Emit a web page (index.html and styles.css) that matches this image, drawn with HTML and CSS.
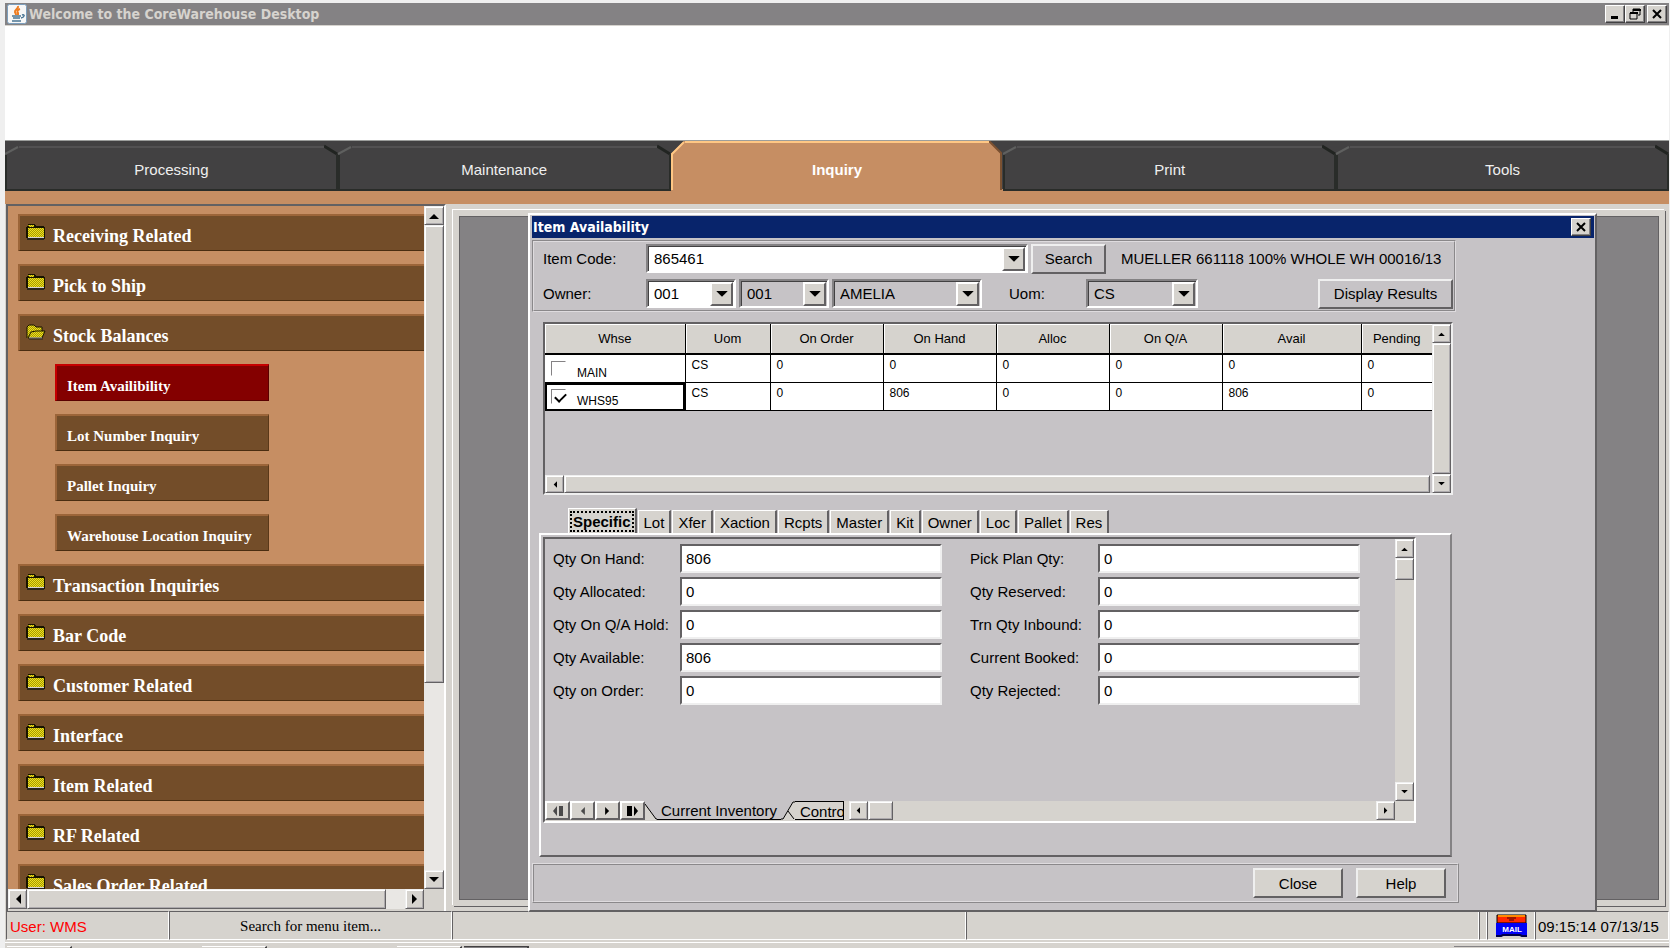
FILE: index.html
```html
<!doctype html>
<html lang="en">
  <head>
    <meta charset="UTF-8" />
    <meta name="viewport" content="width=device-width, initial-scale=1.0" />
    <title>Welcome to the CoreWarehouse Desktop</title>
    <link rel="stylesheet" href="styles.css">
  </head>
  <body>
    <!-- Shared icon shapes -->
    <svg class="defs" width="0" height="0" aria-hidden="true">
      <defs>
        <pattern id="dither" width="2" height="2" patternUnits="userSpaceOnUse">
          <rect width="2" height="2" fill="#a59a00" />
          <rect width="1" height="1" fill="#efdf21" />
          <rect x="1" y="1" width="1" height="1" fill="#efdf21" />
        </pattern>
      </defs>
      <symbol id="folder" viewBox="0 0 20 16">
        <path d="M1 14V3h1V1h7v2h9v11z" fill="url(#dither)" />
        <path d="M0 3h2v11H0zM2 0h7v1H2zM8 1h2v1H8zM1 2h17v2H1zM18 3h1v12h-1z" fill="#181400" />
        <path d="M3 1h5v2H3z" fill="url(#dither)" />
        <path d="M2 13h16v1H2z" fill="#d6d3ce" />
        <path d="M1 14h17v2H1z" fill="#29241c" />
      </symbol>
      <symbol id="folder-open" viewBox="0 0 20 16">
        <path d="M1 14V3l2-2h5l2 2h6v4" fill="url(#dither)" stroke="#181400" />
        <path d="M2 14l3-6 5-1h9l-3 7z" fill="url(#dither)" stroke="#181400" />
        <path d="M3 14h13" stroke="#c6c3c6" />
        <path d="M3 15h14" stroke="#29241c" />
      </symbol>
      <symbol id="up" viewBox="0 0 10 6"><path d="M0 6L5 1l5 5z" /></symbol>
      <symbol id="down" viewBox="0 0 10 6"><path d="M0 0h10L5 5z" /></symbol>
      <symbol id="left" viewBox="0 0 6 10"><path d="M6 0v10L1 5z" /></symbol>
      <symbol id="right" viewBox="0 0 6 10"><path d="M0 0v10l5-5z" /></symbol>
      <symbol id="cross" viewBox="0 0 12 10"><path d="M2 1l8 8M10 1L2 9" fill="none" stroke="#000" stroke-width="2" /></symbol>
      <symbol id="edge-left" viewBox="0 0 14 49">
        <path d="M0 13L13 6" stroke="#5f605f" stroke-width="2" />
        <path d="M1 14v35" stroke="#292c29" stroke-width="2" />
      </symbol>
      <symbol id="edge-right" viewBox="0 0 14 49">
        <path d="M0 5l13 8" stroke="#212421" stroke-width="3" />
        <path d="M13 13v36" stroke="#292c29" stroke-width="2" />
      </symbol>
      <symbol id="edge-left-active" viewBox="0 0 14 49">
        <path d="M0 13L13 0h1v49H0z" fill="#c68e63" />
        <path d="M1 49V13L13 1" fill="none" stroke="#ffc784" stroke-width="2" />
      </symbol>
      <symbol id="edge-right-active" viewBox="0 0 14 49">
        <path d="M0 0l12 12v37H0z" fill="#c68e63" />
        <path d="M0 0l12 12v37" fill="none" stroke="#7b5131" stroke-width="2" />
      </symbol>
    </svg>

    <header class="titlebar">
      <svg class="java" width="20" height="20" viewBox="0 0 20 20" aria-hidden="true">
        <rect x="0.5" y="0.5" width="19" height="19" rx="2" fill="#f7f7f7" stroke="#7b9ebd" />
        <path d="M11 2c1 3-4 4-3 6 0 1 1 1 1 3M13 5c-3 1-3 3-2 4v2" fill="none" stroke="#ef7d21" stroke-width="2" />
        <path d="M5 12h9M6 14h7M15 11c3-1 3 2-1 3M5 17h9" fill="none" stroke="#4a7594" stroke-width="1.5" />
      </svg>
      <h1 class="titlebar-text">Welcome to the CoreWarehouse Desktop</h1>
      <div class="window-buttons">
        <button class="caption-btn" aria-label="Minimize"><svg width="12" height="10"><path d="M2 7h7v3H2z" /></svg></button>
        <button class="caption-btn" aria-label="Restore">
          <svg width="12" height="12"><path d="M4 1h7v6H9M4 1v3M1 5h7v6H1z" fill="none" stroke="#000" /><path d="M4 1h8v2H4zM1 4h8v2H1z" /></svg>
        </button>
        <button class="caption-btn caption-close" aria-label="Close window"><svg width="12" height="10"><use href="#cross" /></svg></button>
      </div>
    </header>
    <div class="banner"></div>

    <nav class="main-tabs">
      <a class="main-tab" href="#processing"><svg width="14" height="49"><use href="#edge-left" /></svg><span>Processing</span><svg width="14" height="49"><use href="#edge-right" /></svg></a>
      <a class="main-tab" href="#maintenance"><svg width="14" height="49"><use href="#edge-left" /></svg><span>Maintenance</span><svg width="14" height="49"><use href="#edge-right" /></svg></a>
      <a class="main-tab active" href="#inquiry"><svg width="14" height="49"><use href="#edge-left-active" /></svg><span>Inquiry</span><svg width="14" height="49"><use href="#edge-right-active" /></svg></a>
      <a class="main-tab" href="#print"><svg width="14" height="49"><use href="#edge-left" /></svg><span>Print</span><svg width="14" height="49"><use href="#edge-right" /></svg></a>
      <a class="main-tab" href="#tools"><svg width="14" height="49"><use href="#edge-left" /></svg><span>Tools</span><svg width="14" height="49"><use href="#edge-right" /></svg></a>
    </nav>

    <div class="workspace">
      <!-- Menu tree -->
      <aside class="sidebar">
        <nav class="menu">
          <a class="menu-item" href="#receiving"><svg width="20" height="16"><use href="#folder" /></svg>Receiving Related</a>
          <a class="menu-item" href="#pick"><svg width="20" height="16"><use href="#folder" /></svg>Pick to Ship</a>
          <a class="menu-item" href="#stock"><svg width="20" height="16"><use href="#folder-open" /></svg>Stock Balances</a>
          <a class="menu-sub selected" href="#item-avail">Item Availibility</a>
          <a class="menu-sub" href="#lot">Lot Number Inquiry</a>
          <a class="menu-sub" href="#pallet">Pallet Inquiry</a>
          <a class="menu-sub" href="#location">Warehouse Location Inquiry</a>
          <a class="menu-item" href="#transaction"><svg width="20" height="16"><use href="#folder" /></svg>Transaction Inquiries</a>
          <a class="menu-item" href="#barcode"><svg width="20" height="16"><use href="#folder" /></svg>Bar Code</a>
          <a class="menu-item" href="#customer"><svg width="20" height="16"><use href="#folder" /></svg>Customer Related</a>
          <a class="menu-item" href="#interface"><svg width="20" height="16"><use href="#folder" /></svg>Interface</a>
          <a class="menu-item" href="#item"><svg width="20" height="16"><use href="#folder" /></svg>Item Related</a>
          <a class="menu-item" href="#rf"><svg width="20" height="16"><use href="#folder" /></svg>RF Related</a>
          <a class="menu-item" href="#sales"><svg width="20" height="16"><use href="#folder" /></svg>Sales Order Related</a>
        </nav>
        <div class="scroll scroll-v menu-scroll-v">
          <button class="scroll-btn" aria-label="Scroll up"><svg width="10" height="6"><use href="#up" /></svg></button>
          <div class="thumb"></div>
          <div class="track"></div>
          <button class="scroll-btn" aria-label="Scroll down"><svg width="10" height="6"><use href="#down" /></svg></button>
        </div>
        <div class="scroll scroll-h menu-scroll-h">
          <button class="scroll-btn" aria-label="Scroll left"><svg width="6" height="10"><use href="#left" /></svg></button>
          <div class="thumb"></div>
          <div class="track"></div>
          <button class="scroll-btn" aria-label="Scroll right"><svg width="6" height="10"><use href="#right" /></svg></button>
        </div>
      </aside>

      <main class="desktop">
        <div class="desktop-area"></div>

        <!-- Item Availability window -->
        <section class="window">
          <header class="window-title">
            <h2>Item Availability</h2>
            <button class="caption-btn" aria-label="Close Item Availability"><svg width="12" height="10"><use href="#cross" /></svg></button>
          </header>

          <form class="criteria">
            <div class="criteria-row">
              <label class="criteria-label" for="item-code">Item Code:</label>
              <div class="combo combo-item">
                <select id="item-code"><option>865461</option></select>
                <span class="combo-arrow"><svg width="12" height="7" viewBox="0 0 10 6"><use href="#down" /></svg></span>
              </div>
              <button class="btn btn-search" type="button">Search</button>
              <span class="item-name">MUELLER 661118 100% WHOLE WH 00016/13</span>
            </div>
            <div class="criteria-row">
              <label class="criteria-label" for="owner">Owner:</label>
              <div class="combo combo-small">
                <select id="owner"><option>001</option></select>
                <span class="combo-arrow"><svg width="12" height="7" viewBox="0 0 10 6"><use href="#down" /></svg></span>
              </div>
              <div class="combo combo-small readonly">
                <select aria-label="Owner division"><option>001</option></select>
                <span class="combo-arrow"><svg width="12" height="7" viewBox="0 0 10 6"><use href="#down" /></svg></span>
              </div>
              <div class="combo combo-name readonly">
                <select aria-label="Owner name"><option>AMELIA</option></select>
                <span class="combo-arrow"><svg width="12" height="7" viewBox="0 0 10 6"><use href="#down" /></svg></span>
              </div>
              <label class="uom-label" for="uom">Uom:</label>
              <div class="combo combo-uom readonly">
                <select id="uom"><option>CS</option></select>
                <span class="combo-arrow"><svg width="12" height="7" viewBox="0 0 10 6"><use href="#down" /></svg></span>
              </div>
              <button class="btn btn-results" type="button">Display Results</button>
            </div>
          </form>

          <div class="grid-box">
            <div class="grid-view">
              <table class="stock">
                <colgroup>
                  <col class="col-whse"><col class="col-uom"><col class="col-qty"><col class="col-qty"><col class="col-qty"><col class="col-qty"><col class="col-avail"><col>
                </colgroup>
                <thead>
                  <tr><th>Whse</th><th>Uom</th><th>On Order</th><th>On Hand</th><th>Alloc</th><th>On Q/A</th><th>Avail</th><th>Pending</th></tr>
                </thead>
                <tbody>
                  <tr>
                    <td><label class="whse"><input type="checkbox"><span>MAIN</span></label></td>
                    <td>CS</td><td>0</td><td>0</td><td>0</td><td>0</td><td>0</td><td>0</td>
                  </tr>
                  <tr>
                    <td class="focused"><label class="whse"><input type="checkbox" checked><span>WHS95</span></label></td>
                    <td>CS</td><td>0</td><td>806</td><td>0</td><td>0</td><td>806</td><td>0</td>
                  </tr>
                </tbody>
              </table>
            </div>
            <div class="scroll scroll-v">
              <button class="scroll-btn" aria-label="Scroll table up"><svg width="7" height="4"><use href="#up" /></svg></button>
              <div class="thumb thumb-fill"></div>
              <button class="scroll-btn" aria-label="Scroll table down"><svg width="7" height="4"><use href="#down" /></svg></button>
            </div>
            <div class="scroll scroll-h">
              <button class="scroll-btn" aria-label="Scroll table left"><svg width="4" height="7"><use href="#left" /></svg></button>
              <div class="thumb thumb-fill"></div>
            </div>
          </div>

          <div class="detail-tabs" role="tablist">
            <button class="detail-tab active" role="tab" aria-selected="true"><span>Specific</span></button>
            <button class="detail-tab" role="tab">Lot</button>
            <button class="detail-tab" role="tab">Xfer</button>
            <button class="detail-tab" role="tab">Xaction</button>
            <button class="detail-tab" role="tab">Rcpts</button>
            <button class="detail-tab" role="tab">Master</button>
            <button class="detail-tab" role="tab">Kit</button>
            <button class="detail-tab" role="tab">Owner</button>
            <button class="detail-tab" role="tab">Loc</button>
            <button class="detail-tab" role="tab">Pallet</button>
            <button class="detail-tab" role="tab">Res</button>
          </div>

          <div class="detail-panel">
            <div class="sheet">
              <form class="fields">
                <label for="on-hand">Qty On Hand:</label><input id="on-hand" type="text" value="806">
                <label for="pick-plan">Pick Plan Qty:</label><input id="pick-plan" type="text" value="0">
                <label for="allocated">Qty Allocated:</label><input id="allocated" type="text" value="0">
                <label for="reserved">Qty Reserved:</label><input id="reserved" type="text" value="0">
                <label for="qa-hold">Qty On Q/A Hold:</label><input id="qa-hold" type="text" value="0">
                <label for="inbound">Trn Qty Inbound:</label><input id="inbound" type="text" value="0">
                <label for="available">Qty Available:</label><input id="available" type="text" value="806">
                <label for="booked">Current Booked:</label><input id="booked" type="text" value="0">
                <label for="on-order">Qty on Order:</label><input id="on-order" type="text" value="0">
                <label for="rejected">Qty Rejected:</label><input id="rejected" type="text" value="0">
              </form>
              <div class="scroll scroll-v plain">
                <button class="scroll-btn" aria-label="Scroll sheet up"><svg width="7" height="4"><use href="#up" /></svg></button>
                <div class="thumb"></div>
                <div class="track"></div>
                <button class="scroll-btn" aria-label="Scroll sheet down"><svg width="7" height="4"><use href="#down" /></svg></button>
              </div>
              <div class="sheet-bar">
                <button class="nav-btn dim" aria-label="First sheet"><svg width="12" height="10" viewBox="0 0 12 10"><path d="M5 0v10L1 5zM7 0h4v10H7z" /></svg></button>
                <button class="nav-btn dim" aria-label="Previous sheet"><svg width="5" height="8" viewBox="0 0 6 10"><use href="#left" /></svg></button>
                <button class="nav-btn" aria-label="Next sheet"><svg width="5" height="8" viewBox="0 0 6 10"><use href="#right" /></svg></button>
                <button class="nav-btn" aria-label="Last sheet"><svg width="12" height="10" viewBox="0 0 12 10"><path d="M0 0h5v10H0zM7 0v10l4-5z" /></svg></button>
                <svg class="slant" width="12" height="19"><path d="M0 0h12v18h-1L0 3z" fill="#c6c3c6" /><path d="M0 3l11 15h1" fill="none" stroke="#000" /></svg>
                <button class="sheet-tab current">Current Inventory</button>
                <svg class="slant" width="14" height="19"><path d="M0 0h12L2 18H0z" fill="#c6c3c6" /><path d="M0 18h2L12 1h2M7 10l6 8" fill="none" stroke="#000" /></svg>
                <button class="sheet-tab next">Control</button>
                <button class="scroll-btn sheet-left" aria-label="Scroll sheets left"><svg width="4" height="7"><use href="#left" /></svg></button>
                <div class="thumb"></div>
                <div class="track"></div>
                <button class="scroll-btn" aria-label="Scroll sheets right"><svg width="4" height="7"><use href="#right" /></svg></button>
              </div>
            </div>
          </div>

          <footer class="actions">
            <button class="btn btn-action">Close</button>
            <button class="btn btn-action">Help</button>
          </footer>
        </section>
      </main>
    </div>

    <footer class="statusbar">
      <div class="cell cell-user">User: WMS</div>
      <div class="cell cell-search">Search for menu item...</div>
      <div class="cell cell-message"></div>
      <div class="cell cell-info"></div>
      <div class="cell cell-gap"></div>
      <div class="cell cell-mail">
        <svg width="31" height="23" viewBox="0 0 31 23" role="img" aria-label="Mail">
          <path d="M1 1h29v8H1z" fill="#ff2800" stroke="#000" />
          <path d="M2 2h27" stroke="#ff8a00" stroke-width="2" />
          <path d="M11 4h9M13 6h5" stroke="#420000" />
          <path d="M0 9h31v14h-5l-2-2H7l-2 2H0z" fill="#0000f7" />
          <path d="M0 22h5l2-1h17l2 1h5" fill="none" stroke="#00004a" stroke-width="2" />
          <text class="mail-text" x="16" y="18" text-anchor="middle">MAIL</text>
        </svg>
      </div>
      <div class="cell cell-clock">09:15:14 07/13/15</div>
    </footer>

    <div class="taskbar">
      <span class="task"></span>
      <span class="task"></span>
      <span class="task"></span>
      <span class="task task-pressed"></span>
      <span class="tray"></span>
    </div>
  </body>
</html>
```
FILE: styles.css
```css
* {
  box-sizing: border-box;
}

body {
  display: flex;
  flex-direction: column;
  height: 100vh;
  margin: 0;
  padding: 3px 1px 0 5px;
  overflow: hidden;
  background: #efefef;
  color: #000;
  font-family: "Liberation Sans", Arial, sans-serif;
  font-size: 15px;
}

button,
input,
select {
  margin: 0;
  border-radius: 0;
  color: inherit;
  font: inherit;
}

a {
  text-decoration: none;
}

.defs {
  position: absolute;
}

/* Main title bar */
.titlebar {
  display: flex;
  align-items: center;
  flex: none;
  height: 23px;
  padding: 0 2px;
  background: #848284;
  border-bottom: 1px solid #d6d3ce;
}

.titlebar-text {
  flex: 1;
  margin: 0 0 0 2px;
  color: #d6d3ce;
  font: bold 14px "DejaVu Sans Condensed", "DejaVu Sans", Tahoma, sans-serif;
}

.window-buttons {
  display: flex;
}

.caption-btn {
  display: flex;
  align-items: center;
  justify-content: center;
  width: 20px;
  height: 18px;
  padding: 0;
  background: #d6d3ce;
  border: 1px solid;
  border-color: #fff #424142 #424142 #fff;
  box-shadow: inset -1px -1px #848284;
}

.caption-close {
  margin-left: 2px;
}

.banner {
  flex: none;
  height: 114px;
  background: #fff;
}

/* Main tabs */
.main-tabs {
  display: flex;
  flex: none;
  height: 64px;
  background: linear-gradient(#424142 50px, #c68e63 50px);
  border-top: 1px solid #9c9e9c;
  border-bottom: 13px solid #c68e63;
}

.main-tab {
  display: flex;
  flex: 1;
  border-bottom: 2px solid #292c29;
  color: #efefef;
}

.main-tab svg {
  flex: none;
}

.main-tab span {
  flex: 1;
  margin-top: 5px;
  border-top: 2px solid #525152;
  line-height: 43px;
  text-align: center;
}

.main-tab.active {
  border-bottom-color: #c68e63;
  color: #fff;
  font-weight: bold;
}

.main-tab.active span {
  margin-top: 0;
  padding-top: 5px;
  background: #c68e63;
  border-top-color: #ffc784;
}

.workspace {
  display: flex;
  flex: 1;
  min-height: 0;
  background: #d6d3ce;
}

/* Sidebar menu */
.sidebar {
  display: grid;
  flex: none;
  grid-template-columns: 1fr 20px;
  grid-template-rows: 1fr 20px;
  width: 440px;
  margin-left: 1px;
  padding-bottom: 2px;
  background: #d6d3ce;
  border-top: 2px solid #636163;
  border-left: 2px solid #636163;
  border-right: 2px solid #fff;
}

.menu {
  display: flex;
  flex-direction: column;
  gap: 13px;
  min-height: 0;
  padding: 8px 0 0 10px;
  overflow: hidden;
  background: #c68e63;
}

.menu-item,
.menu-sub {
  display: flex;
  flex: none;
  align-items: flex-start;
  height: 37px;
  padding: 8px 0 0 6px;
  background: #734d29;
  border: 2px solid #9c6539;
  border-width: 2px 0 1px 2px;
  border-bottom-color: #4a2c10;
  color: #fff;
  font: bold 18px/24px "Liberation Serif", "Times New Roman", serif;
}

.menu-item svg {
  margin-right: 7px;
}

.menu-sub {
  width: 214px;
  margin-left: 37px;
  padding-left: 10px;
  border-right: 1px solid #5a3818;
  font-size: 15px;
}

.menu-sub.selected {
  background: #840000;
  border-color: #c60000 #5a0000 #5a0000 #c60000;
}

/* Scroll bars */
.scroll {
  display: flex;
  min-width: 0;
  min-height: 0;
}

.scroll-v {
  flex-direction: column;
}

.scroll-btn {
  display: flex;
  align-items: center;
  justify-content: center;
  flex: 0 0 19px;
  padding: 0;
}

.scroll-btn,
.thumb {
  background: #d6d3ce;
  border: 1px solid;
  border-color: #efefef #636163 #636163 #efefef;
  box-shadow: inset 1px 1px #fff, inset -1px -1px #adaaad;
}

.track {
  flex: 1;
  background: #e9e7e4;
}

.menu-scroll-v .thumb {
  flex: 0 0 67%;
}

.menu-scroll-h .thumb {
  flex: 0 0 359px;
}

.thumb-fill {
  flex: 1;
}

/* Desktop */
.desktop {
  position: relative;
  flex: 1;
  min-width: 0;
  padding: 6px 4px 5px 7px;
}

.desktop-area {
  height: 100%;
  background: #848284;
  border: 6px solid #d6d3ce;
  outline: 1px solid #636163;
  outline-offset: -7px;
  box-shadow: -1px -1px #fff, 1px 1px #636163;
}

.window {
  position: absolute;
  top: 9px;
  right: 72px;
  bottom: -1px;
  left: 82px;
  display: flex;
  flex-direction: column;
  padding: 1px 1px 1px 2px;
  background: #c6c3c6;
  border: 2px solid;
  border-color: #fff #636163 #636163 #fff;
}

.window-title {
  display: flex;
  align-items: center;
  flex: none;
  height: 22px;
  padding: 0 3px 0 1px;
  background: #08246b;
  color: #fff;
}

.window-title h2 {
  flex: 1;
  margin: 0;
  font: bold 14px "DejaVu Sans Condensed", "DejaVu Sans", Tahoma, sans-serif;
}

.criteria {
  display: flex;
  flex-direction: column;
  gap: 6px;
  flex: none;
  max-width: 924px;
  margin-top: 2px;
  padding: 2px 1px;
  border: 2px groove #dedbde;
}

.criteria-row {
  display: flex;
  align-items: center;
  gap: 3px;
  height: 29px;
}

.criteria-label {
  width: 108px;
  padding-left: 8px;
}

.combo {
  display: flex;
  height: 29px;
  background: #fff;
  border: 2px solid;
  border-color: #848284 #fff #fff #848284;
  box-shadow: inset 1px 1px #424142;
}

.combo select {
  flex: 1;
  min-width: 0;
  padding: 0 0 0 6px;
  appearance: none;
  background: none;
  border: 0;
}

.combo-arrow {
  display: flex;
  align-items: center;
  justify-content: center;
  width: 23px;
  margin: 1px 1px 0 0;
  background: #d6d3ce;
  border: 2px solid;
  border-color: #fff #636163 #636163 #fff;
  pointer-events: none;
}

.combo.readonly {
  background: #c6c3c6;
}

.combo-item {
  width: 382px;
}

.combo-small {
  width: 90px;
}

.combo-name {
  width: 150px;
}

.combo-uom {
  width: 112px;
}

.uom-label {
  width: 74px;
  margin-left: 24px;
}

.item-name {
  margin-left: 12px;
  white-space: nowrap;
}

.btn {
  height: 30px;
  padding: 0;
  background: #c6c3c6;
  border: 2px solid;
  border-color: #efefef #636163 #636163 #efefef;
}

.btn-search {
  width: 75px;
}

.btn-results {
  width: 135px;
  margin-left: auto;
}

/* Stock table */
.grid-box {
  display: grid;
  flex: none;
  grid-template-columns: 1fr 19px;
  grid-template-rows: 1fr 18px;
  max-width: 910px;
  height: 173px;
  margin: 10px 0 0 11px;
  border: 2px solid;
  border-color: #636163 #efefef #efefef #636163;
}

.grid-box .scroll-v {
  grid-row: 1 / 3;
  grid-column: 2;
}

.grid-box .scroll-h {
  padding-right: 2px;
}

.grid-view {
  min-width: 0;
  overflow: hidden;
}

.stock {
  width: 100%;
  table-layout: fixed;
  border-collapse: collapse;
  background: #fff;
  font-size: 12px;
}

.col-whse {
  width: 140px;
}

.col-uom {
  width: 85px;
}

.col-qty {
  width: 113px;
}

.col-avail {
  width: 139px;
}

.stock th {
  height: 30px;
  padding: 0;
  background: #d6d3ce;
  border-right: 1px solid #000;
  border-bottom: 2px solid #000;
  box-shadow: inset 1px 1px #fff;
  font-size: 13px;
  font-weight: normal;
}

.stock td {
  height: 27px;
  padding: 3px 6px 2px;
  border-right: 1px solid #000;
  border-bottom: 1px solid #000;
  line-height: 14px;
  vertical-align: top;
}

.stock tr > :last-child {
  border-right: 0;
}

.whse {
  display: flex;
  align-items: flex-end;
  gap: 11px;
  height: 22px;
}

.whse input {
  width: 15px;
  height: 15px;
  margin: 0 0 4px;
  appearance: none;
  background: #fff;
  border: 1px solid;
  border-color: #848284 #fff #fff #848284;
}

.whse input:checked::after {
  content: "";
  display: block;
  width: 9px;
  height: 5px;
  margin: 3px 0 0 3px;
  border: solid #000;
  border-width: 0 0 2px 2px;
  transform: rotate(-45deg);
}

.stock .focused {
  outline: 2px solid #000;
  outline-offset: -2px;
}

/* Detail tabs */
.detail-tabs {
  display: flex;
  align-items: flex-end;
  flex: none;
  gap: 1px;
  height: 24px;
  margin: 14px 0 0 36px;
}

.detail-tab {
  height: 23px;
  padding: 0 5px;
  background: #d6d3ce;
  border: 1px solid #fff;
  border-right: 2px solid #636163;
  border-bottom: 0;
}

.detail-tab.active {
  height: 25px;
  padding: 0 1px;
  font-weight: bold;
}

.detail-tab.active span {
  display: block;
  padding: 0 1px;
  border: 2px dotted #000;
  line-height: 17px;
}

.detail-panel {
  display: flex;
  flex: none;
  max-width: 913px;
  height: 324px;
  margin-left: 7px;
  padding: 2px 34px 32px 2px;
  border: 2px solid;
  border-color: #fff #848284 #636163 #fff;
}

.sheet {
  display: grid;
  flex: 1;
  grid-template-columns: 1fr 19px;
  grid-template-rows: 1fr 20px;
  border: 2px solid;
  border-color: #636163 #fff #fff #636163;
}

.fields {
  display: grid;
  grid-template-columns: 127px 262px 28px 128px 262px;
  grid-auto-rows: 29px;
  align-content: start;
  align-items: center;
  row-gap: 4px;
  padding: 5px 0 0 8px;
}

.fields label:nth-of-type(even) {
  grid-column: 4;
}

.fields input {
  width: 100%;
  height: 29px;
  padding: 0 4px;
  background: #fff;
  border: 2px solid;
  border-color: #636163 #efefef #efefef #636163;
}

.plain .thumb {
  flex: 0 0 22px;
}

.plain .track,
.sheet-bar .track {
  background: #d6d3ce;
}

.sheet-bar {
  display: flex;
  grid-column: 1 / 3;
  min-width: 0;
  padding: 0 19px 0 0;
  background: #d6d3ce;
}

.nav-btn {
  display: flex;
  align-items: center;
  justify-content: center;
  flex: 0 0 25px;
  height: 19px;
  padding: 0;
  background: #d6d3ce;
  border: 2px solid;
  border-color: #fff #636163 #636163 #fff;
}

.nav-btn.dim {
  fill: #4a494a;
}

.slant {
  flex: none;
}

.sheet-tab {
  height: 19px;
  padding: 0;
  background: #d6d3ce;
  border: 0;
  line-height: 20px;
  white-space: nowrap;
}

.sheet-tab.current {
  padding: 0 4px;
  background: #c6c3c6;
  border-bottom: 1px solid #000;
}

.sheet-tab.next {
  width: 49px;
  padding-left: 5px;
  overflow: hidden;
  border-top: 1px solid #000;
  border-right: 1px solid #000;
  border-bottom: 1px solid #000;
  text-align: left;
}

.sheet-left {
  margin-left: 5px;
}

.sheet-bar .thumb {
  flex: 0 0 25px;
}

.sheet-bar .scroll-btn,
.sheet-bar .thumb {
  height: 19px;
}

/* Window actions */
.actions {
  display: flex;
  justify-content: flex-end;
  gap: 13px;
  flex: none;
  max-width: 927px;
  height: 40px;
  margin-top: 6px;
  padding: 3px 11px 0 0;
  border: 2px ridge #dedbde;
}

.btn-action {
  width: 90px;
  background: #d6d3ce;
}

/* Status bar */
.statusbar {
  display: flex;
  flex: none;
  height: 32px;
  padding: 0 0 2px 1px;
  background: #d6d3ce;
  border-bottom: 1px solid #fff;
}

.cell {
  display: flex;
  align-items: center;
  padding-top: 2px;
  border: 1px solid #fff;
  border-top-color: #636163;
  border-left-color: #636163;
}

.cell-user {
  width: 163px;
  padding-left: 3px;
  color: #f00;
}

.cell-search {
  justify-content: center;
  width: 283px;
  font: 15px "Liberation Serif", "Times New Roman", serif;
}

.cell-message {
  flex: 0 0 514px;
}

.cell-info {
  flex: 1;
}

.cell-gap {
  width: 8px;
}

.cell-mail {
  justify-content: center;
  width: 48px;
  padding-top: 0;
}

.mail-text {
  fill: #fff;
  font: bold 8px "Liberation Sans", sans-serif;
}

.cell-clock {
  width: 134px;
  padding-left: 2px;
  white-space: nowrap;
}

/* Top edge of the OS taskbar */
.taskbar {
  display: flex;
  align-items: flex-end;
  flex: none;
  gap: 130px;
  height: 5px;
  padding-left: 2px;
  background: #d6d3ce;
}

.task {
  width: 65px;
  height: 2px;
  background: #d6d3ce;
  border-top: 1px solid #fff;
  border-right: 2px solid #424142;
}

.task-pressed {
  margin-left: -128px;
  background: #848284;
  border-top-color: #424142;
}

.tray {
  width: 215px;
  height: 2px;
  margin-left: auto;
  border-top: 1px solid #848284;
}
```
